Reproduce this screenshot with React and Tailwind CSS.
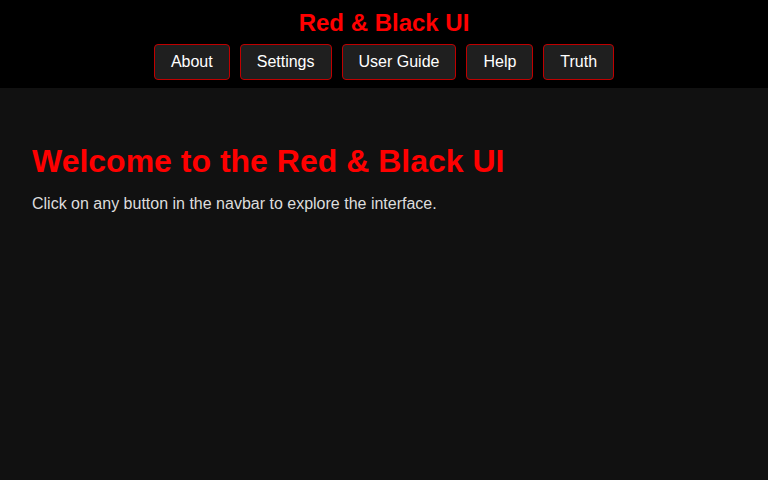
export default function App() {
  const links = ["About", "Settings", "User Guide", "Help", "Truth"];
  return (
    <div className="min-h-[480px] bg-[#111111] font-['Liberation_Sans',Arial,sans-serif]">
      <header className="bg-black px-2 pt-[9px] pb-2 text-center">
        <h1 className="m-0 mb-[7px] text-[24px] font-bold leading-[27.6px] text-[#ff0000]">
          Red &amp; Black UI
        </h1>
        <nav className="flex justify-center gap-[10px]">
          {links.map((l) => (
            <button
              key={l}
              className="rounded-[4px] border border-[#c00000] bg-[#1f1f1f] px-4 py-2 text-[16px] leading-[18.4px] text-white"
            >
              {l}
            </button>
          ))}
        </nav>
      </header>
      <main className="p-8">
        <h1 className="mt-[23px] mb-[15px] text-[32px] font-bold leading-[36.8px] text-[#ff0000]">
          Welcome to the Red &amp; Black UI
        </h1>
        <p className="text-[16px] leading-[18.4px] text-[#dddddd]">
          Click on any button in the navbar to explore the interface.
        </p>
      </main>
    </div>
  );
}
